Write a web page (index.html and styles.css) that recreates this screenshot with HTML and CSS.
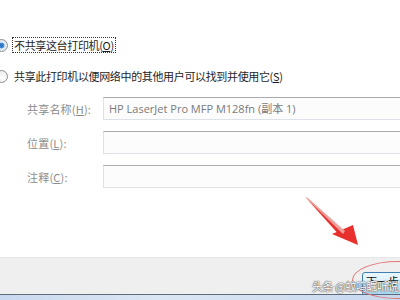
FILE: index.html
```html
<!DOCTYPE html>
<html lang="zh-CN">
<head>
    <meta charset="UTF-8">
    <title>共享打印机</title>
    <link rel="stylesheet" href="styles.css">
</head>
<body>
    <div class="window">
        <div class="main">
            <div class="option">
                <span class="radio checked"></span>
                <span class="option-text focus">不共享这台打印机(<u>O</u>)</span>
            </div>
            <div class="option">
                <span class="radio"></span>
                <span class="option-text">共享此打印机以便网络中的其他用户可以找到并使用它(<u>S</u>)</span>
            </div>
            <div class="form">
                <label class="form-label">共享名称(<u>H</u>):</label>
                <div class="field">HP LaserJet Pro MFP M128fn (副本 1)</div>
                <label class="form-label">位置(<u>L</u>):</label>
                <div class="field"></div>
                <label class="form-label">注释(<u>C</u>):</label>
                <div class="field"></div>
            </div>
        </div>
        <div class="footer">
            <button class="btn-next">下一步(<u>N</u>)</button>
        </div>
        <div class="taskbar"></div>

        <svg class="arrow" width="70" height="60" viewBox="0 0 70 60">
            <path d="M2 3 L40 36 L36 41 Z" fill="#e8302d"/>
            <path d="M27 38 L48 29 L53 49 Z" fill="#e8302d"/>
            <path d="M0 1 L3 2 L40 35 L38 38 Z" fill="#f0a09c"/>
        </svg>
        <div class="circle"></div>
        <div class="watermark">头条 @蚊鸣瞩听说</div>
    </div>
</body>
</html>
```

FILE: styles.css
```css
body {
    margin: 0;
    padding: 0;
    font-family: "Noto Sans CJK SC", "Open Sans", sans-serif;
    color: #1e1e1e;
}
.window {
    position: relative;
    width: 400px;
    height: 300px;
    overflow: hidden;
    display: flex;
    flex-direction: column;
}
.main {
    height: 257px;
    background-color: #fff;
    padding-top: 37px;
    box-sizing: border-box;
}
.option {
    display: flex;
    align-items: center;
    height: 16px;
    font-size: 11px;
    margin-bottom: 15px;
}
.radio {
    width: 11px;
    height: 11px;
    margin-left: -5px;
    border: 1px solid #8f8f8f;
    border-radius: 50%;
    background: radial-gradient(circle at 60% 60%, #fff 0%, #e2e2e2 100%);
    flex-shrink: 0;
}
.radio.checked {
    background: radial-gradient(circle at 50% 50%, #2f6fb6 0, #3b86d3 30%, #d8e6f4 42%, #eef2f6 100%);
}
.option-text {
    margin-left: 5px;
    padding: 0 1px;
    line-height: 14px;
    letter-spacing: -0.35px;
}
.focus {
    outline: 1px dotted #333;
}
.form {
    display: grid;
    grid-template-columns: 76px 320px;
    row-gap: 11px;
    margin-left: 27px;
    margin-top: -2px;
    align-items: center;
}
.form-label {
    color: #8c8c8c;
    font-size: 11px;
    letter-spacing: 0.2px;
}
.field {
    height: 23px;
    box-sizing: border-box;
    border: 1px solid #dde2e8;
    border-top-color: #a8aab0;
    background-color: #fcfcfc;
    color: #7a7a7a;
    font-family: "Open Sans", "Noto Sans CJK SC", sans-serif;
    font-size: 11px;
    line-height: 21px;
    padding-left: 5px;
    white-space: nowrap;
}
.footer {
    height: 37px;
    background-color: #f0eff0;
    border-top: 1px solid #e6e5e7;
    box-sizing: border-box;
    padding-top: 9px;
    padding-left: 362px;
}
.btn-next {
    width: 75px;
    height: 24px;
    border: 1px solid #3c7fb1;
    border-radius: 3px;
    background: linear-gradient(#eaf6fd, #d9f0fc 50%, #bee6fd 51%, #a7d9f5);
    font-family: "Noto Sans CJK SC", sans-serif;
    font-size: 11px;
    line-height: 14px;
    color: #111;
    text-align: left;
    padding: 0 0 6px 3px;
}
.taskbar {
    flex: 1;
    border-top: 1px solid #5d6b7a;
    background: linear-gradient(90deg, #c9d9ee, #dbe6f4 40%, #c7d8ee);
}
.arrow {
    position: absolute;
    left: 305px;
    top: 196px;
}
.circle {
    position: absolute;
    left: 352px;
    top: 261px;
    width: 90px;
    height: 36px;
    border: 1px solid #e0787a;
    border-radius: 50%;
}
.watermark {
    position: absolute;
    left: 312px;
    top: 278px;
    font-size: 11px;
    color: #fff;
    white-space: nowrap;
    letter-spacing: -0.4px;
    text-shadow: 0 0 1px #555, 0 0 1px #555, 0 0 2px #777;
}
```
